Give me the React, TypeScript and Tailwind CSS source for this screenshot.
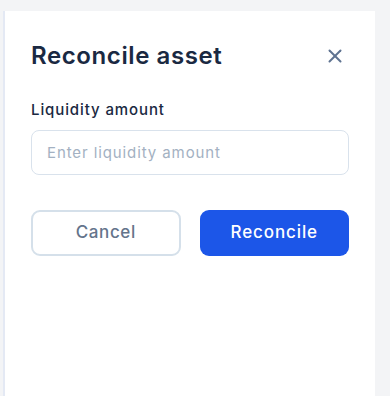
import { X } from 'lucide-react';

export default function App() {
  return (
    <div className="h-[396px] w-[390px] overflow-hidden bg-[#f3f4f6] pl-[3px] pt-[11px] font-['Inter',sans-serif]">
      <div className="h-[400px] w-[372px] border-l-2 border-[#e4e9f4] bg-white px-[26px] pt-[27px]">
        <div className="flex items-center justify-between">
          <h2 className="text-[24px] font-semibold tracking-[0.6px] text-[#1a2942]">Reconcile asset</h2>
          <button type="button" className="mr-[3px] text-[#5f7391]">
            <X size={22} strokeWidth={2.2} />
          </button>
        </div>

        <label className="mt-[25px] block text-[15px] font-medium tracking-[0.9px] text-[#1a2942]">
          Liquidity amount
        </label>
        <input
          type="text"
          placeholder="Enter liquidity amount"
          className="mt-[8px] h-[45px] w-full rounded-lg border border-[#d9e2ec] bg-white px-[15px] text-[15px] tracking-[0.9px] text-[#1a2942] outline-none placeholder:text-[#a3b1c2]"
        />

        <div className="mt-[35px] grid grid-cols-2 gap-[19px]">
          <button
            type="button"
            className="h-[46px] rounded-[9px] border-2 border-[#d5e0ea] bg-white text-[17px] font-medium tracking-[0.6px] text-[#64748b]"
          >
            Cancel
          </button>
          <button
            type="button"
            className="h-[46px] rounded-[9px] bg-[#1c56e8] text-[17px] font-medium tracking-[0.9px] text-white"
          >
            Reconcile
          </button>
        </div>
      </div>
    </div>
  );
}
